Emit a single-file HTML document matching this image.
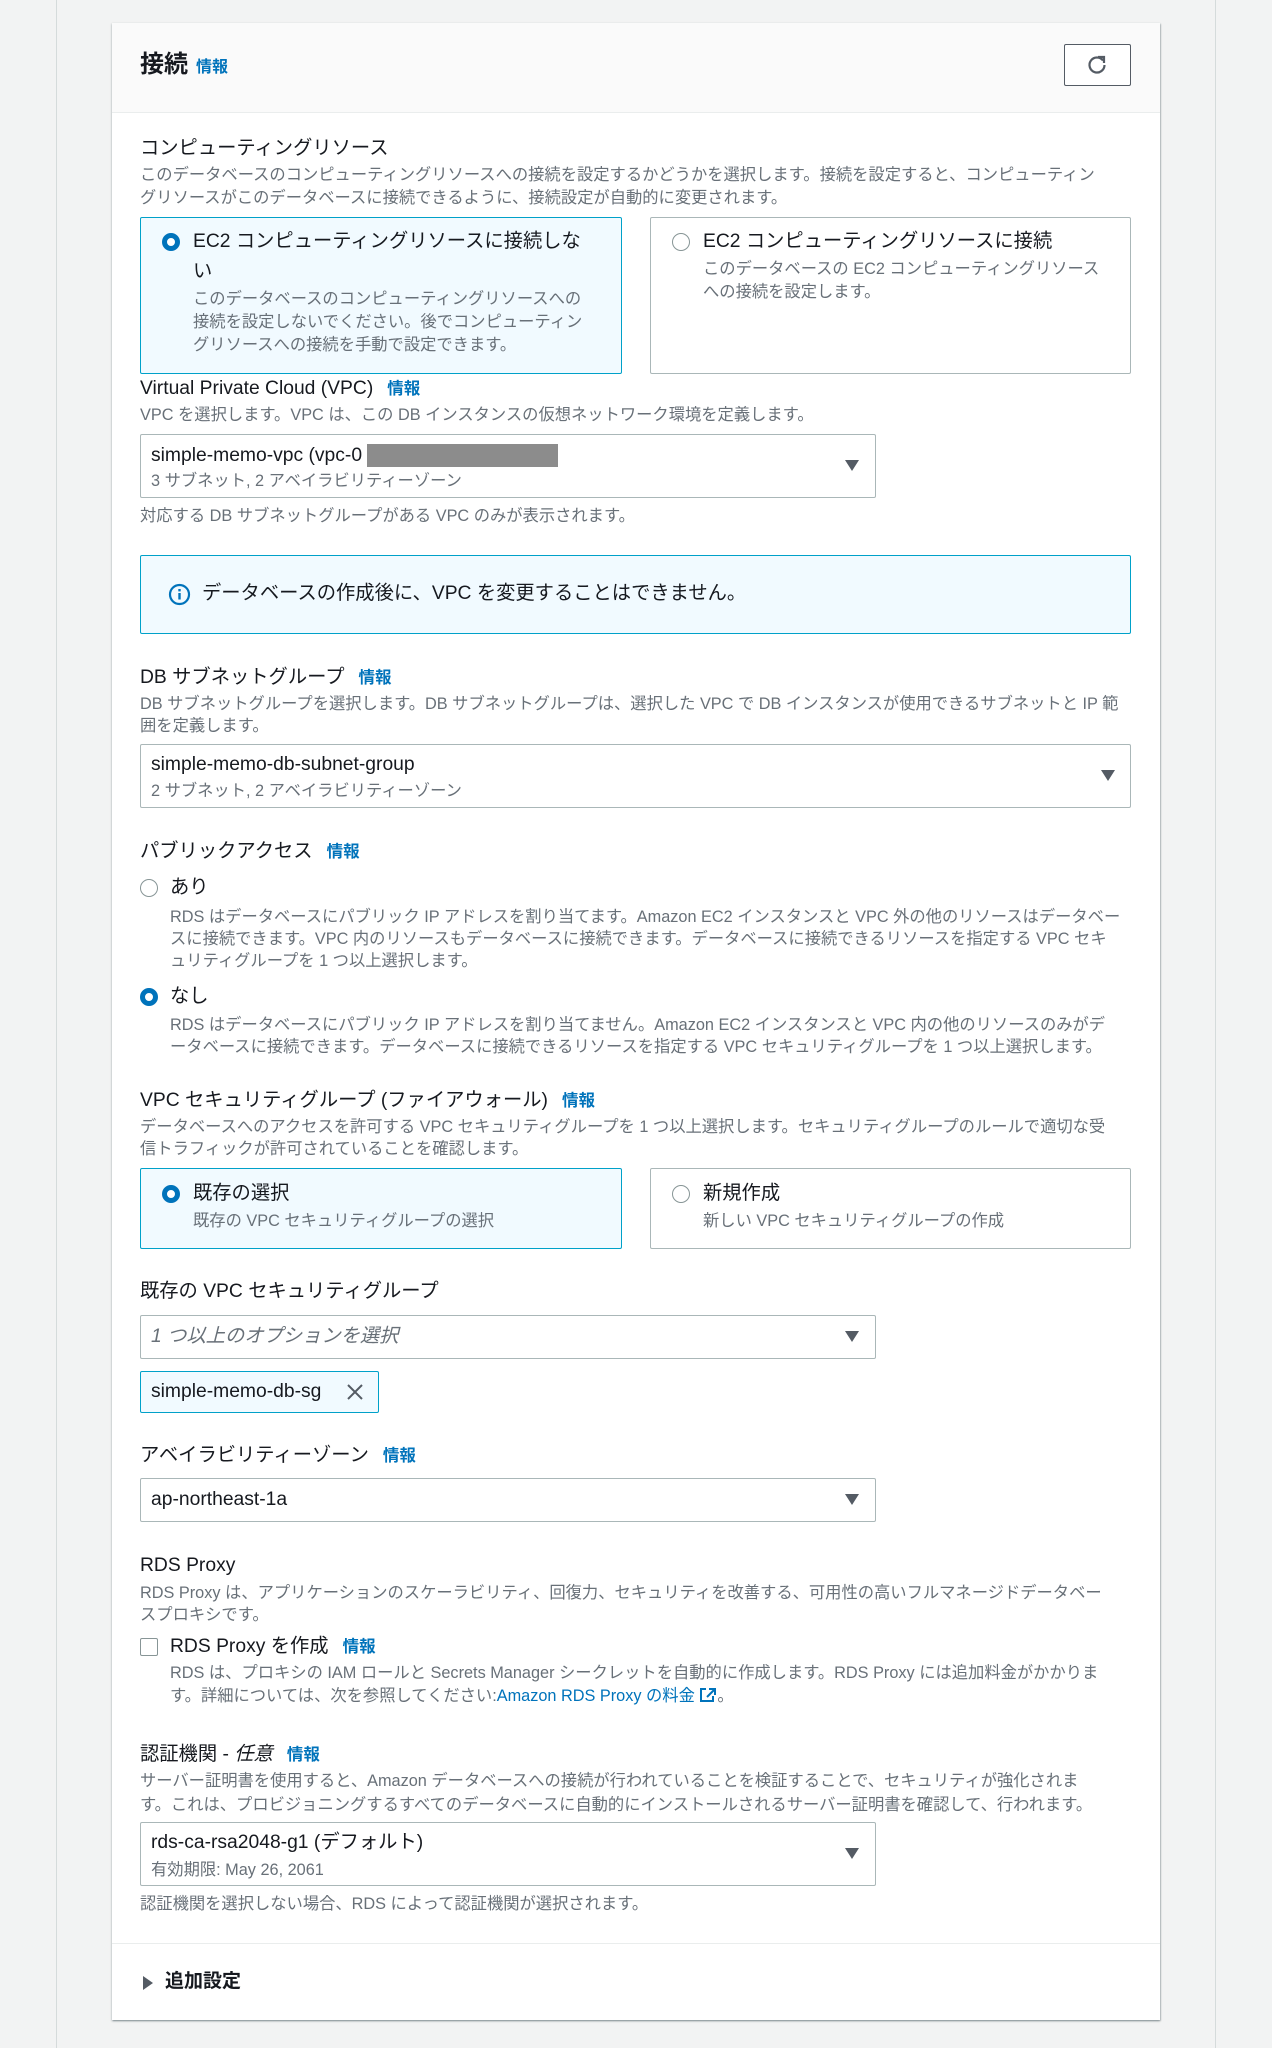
<!DOCTYPE html>
<html><head><meta charset="utf-8">
<style>
*{box-sizing:border-box;margin:0;padding:0}
body{width:1272px;height:2048px;background:#f2f3f3;position:relative;overflow:hidden;font-family:"Liberation Sans","Noto Sans CJK JP",sans-serif;color:#16191f}
.vl{position:absolute;top:0;height:2048px;width:1px;background:#d5dbdb}
.panel{position:absolute;left:112px;top:23px;width:1048px;height:1997px;background:#fff;box-shadow:0 1px 2px rgba(0,28,36,.4),1px 1px 1px rgba(0,28,36,.15)}
.hdr{position:absolute;left:112px;top:23px;width:1048px;height:90px;background:#fafafa;border-bottom:1px solid #eaeded}
.t{position:absolute;white-space:nowrap;line-height:24px}
.lab{font-size:19.3px;color:#16191f}
.d{font-size:16.3px;color:#687078;line-height:23px}
.lk{color:#0073bb;font-size:16.5px;font-weight:bold;margin-left:14px}
.box{position:absolute;border:1px solid #aab7b8;border-radius:2px;background:#fff}
.sel{background:#f1faff;border-color:#00a1c9}
.r{position:absolute;width:18px;height:18px;border-radius:50%;border:1.5px solid #879596;background:#fff}
.r.on{border:5px solid #0073bb}
.arr{position:absolute;width:0;height:0;border-left:7px solid transparent;border-right:7px solid transparent;border-top:11px solid #545b64}
</style></head><body>
<div class="vl" style="left:56px"></div>
<div class="vl" style="left:1215px"></div>
<div class="panel"></div>
<div class="hdr"></div>
<div class="t" style="left:140px;top:50px;font-size:24px;font-weight:bold;line-height:30px">接続<span class="lk" style="font-size:16px;margin-left:8px">情報</span></div>
<div class="box" style="left:1064px;top:44px;width:67px;height:42px;border-color:#545b64"></div>
<svg style="position:absolute;left:1086px;top:54px" width="22" height="22" viewBox="0 0 22 22"><path d="M17 6.5A7.5 7.5 0 1 0 18.5 11" fill="none" stroke="#545b64" stroke-width="2.2"/><path d="M12 3h6v6" fill="none" stroke="#545b64" stroke-width="2.2"/></svg>

<div class="t lab" style="left:140px;top:137px">コンピューティングリソース</div>
<div class="t d" style="left:140px;top:164px">このデータベースのコンピューティングリソースへの接続を設定するかどうかを選択します。接続を設定すると、コンピューティン</div>
<div class="t d" style="left:140px;top:187px">グリソースがこのデータベースに接続できるように、接続設定が自動的に変更されます。</div>

<div class="box sel" style="left:140px;top:217px;width:482px;height:157px"></div>
<div class="r on" style="left:162px;top:233px"></div>
<div class="t lab" style="left:193px;top:230px">EC2 コンピューティングリソースに接続しな</div>
<div class="t lab" style="left:193px;top:260px">い</div>
<div class="t d" style="left:193px;top:288px">このデータベースのコンピューティングリソースへの</div>
<div class="t d" style="left:193px;top:311px">接続を設定しないでください。後でコンピューティン</div>
<div class="t d" style="left:193px;top:334px">グリソースへの接続を手動で設定できます。</div>

<div class="box" style="left:650px;top:217px;width:481px;height:157px"></div>
<div class="r" style="left:672px;top:233px"></div>
<div class="t lab" style="left:703px;top:230px">EC2 コンピューティングリソースに接続</div>
<div class="t d" style="left:703px;top:258px">このデータベースの EC2 コンピューティングリソース</div>
<div class="t d" style="left:703px;top:281px">への接続を設定します。</div>

<div class="t lab" style="left:140px;top:377px">Virtual Private Cloud (VPC)<span class="lk">情報</span></div>
<div class="t d" style="left:140px;top:404px">VPC を選択します。VPC は、この DB インスタンスの仮想ネットワーク環境を定義します。</div>
<div class="box" style="left:140px;top:434px;width:736px;height:64px"></div>
<div class="t lab" style="left:151px;top:444px">simple-memo-vpc (vpc-0</div>
<div style="position:absolute;left:367px;top:444px;width:191px;height:23px;background:#8c8c8c"></div>
<div class="t d" style="left:151px;top:470px">3 サブネット, 2 アベイラビリティーゾーン</div>
<div class="arr" style="left:845px;top:460px"></div>
<div class="t d" style="left:140px;top:505px">対応する DB サブネットグループがある VPC のみが表示されます。</div>

<div class="box" style="left:140px;top:555px;width:991px;height:79px;background:#f1faff;border-color:#00a1c9"></div>
<svg style="position:absolute;left:168px;top:583px" width="23" height="23" viewBox="0 0 23 23"><circle cx="11.5" cy="11.5" r="9.5" fill="none" stroke="#0073bb" stroke-width="2.2"/><rect x="10.3" y="10" width="2.4" height="6.5" fill="#0073bb"/><rect x="10.3" y="6" width="2.4" height="2.4" fill="#0073bb"/></svg>
<div class="t" style="left:202px;top:582px;font-size:19.3px">データベースの作成後に、VPC を変更することはできません。</div>

<div class="t lab" style="left:140px;top:666px">DB サブネットグループ<span class="lk">情報</span></div>
<div class="t d" style="left:140px;top:693px">DB サブネットグループを選択します。DB サブネットグループは、選択した VPC で DB インスタンスが使用できるサブネットと IP 範</div>
<div class="t d" style="left:140px;top:715px">囲を定義します。</div>
<div class="box" style="left:140px;top:744px;width:991px;height:64px"></div>
<div class="t lab" style="left:151px;top:753px">simple-memo-db-subnet-group</div>
<div class="t d" style="left:151px;top:780px">2 サブネット, 2 アベイラビリティーゾーン</div>
<div class="arr" style="left:1101px;top:770px"></div>

<div class="t lab" style="left:140px;top:840px">パブリックアクセス<span class="lk">情報</span></div>
<div class="r" style="left:140px;top:879px"></div>
<div class="t lab" style="left:170px;top:876px">あり</div>
<div class="t d" style="left:170px;top:906px">RDS はデータベースにパブリック IP アドレスを割り当てます。Amazon EC2 インスタンスと VPC 外の他のリソースはデータベー</div>
<div class="t d" style="left:170px;top:928px">スに接続できます。VPC 内のリソースもデータベースに接続できます。データベースに接続できるリソースを指定する VPC セキ</div>
<div class="t d" style="left:170px;top:950px">ュリティグループを 1 つ以上選択します。</div>
<div class="r on" style="left:140px;top:988px"></div>
<div class="t lab" style="left:170px;top:985px">なし</div>
<div class="t d" style="left:170px;top:1014px">RDS はデータベースにパブリック IP アドレスを割り当てません。Amazon EC2 インスタンスと VPC 内の他のリソースのみがデ</div>
<div class="t d" style="left:170px;top:1036px">ータベースに接続できます。データベースに接続できるリソースを指定する VPC セキュリティグループを 1 つ以上選択します。</div>

<div class="t lab" style="left:140px;top:1089px">VPC セキュリティグループ (ファイアウォール)<span class="lk">情報</span></div>
<div class="t d" style="left:140px;top:1116px">データベースへのアクセスを許可する VPC セキュリティグループを 1 つ以上選択します。セキュリティグループのルールで適切な受</div>
<div class="t d" style="left:140px;top:1138px">信トラフィックが許可されていることを確認します。</div>
<div class="box sel" style="left:140px;top:1168px;width:482px;height:81px"></div>
<div class="r on" style="left:162px;top:1185px"></div>
<div class="t lab" style="left:193px;top:1182px">既存の選択</div>
<div class="t d" style="left:193px;top:1210px">既存の VPC セキュリティグループの選択</div>
<div class="box" style="left:650px;top:1168px;width:481px;height:81px"></div>
<div class="r" style="left:672px;top:1185px"></div>
<div class="t lab" style="left:703px;top:1182px">新規作成</div>
<div class="t d" style="left:703px;top:1210px">新しい VPC セキュリティグループの作成</div>

<div class="t lab" style="left:140px;top:1280px">既存の VPC セキュリティグループ</div>
<div class="box" style="left:140px;top:1315px;width:736px;height:44px"></div>
<div class="t lab" style="left:151px;top:1325px;font-style:italic;color:#687078">1 つ以上のオプションを選択</div>
<div class="arr" style="left:845px;top:1331px"></div>
<div class="box sel" style="left:140px;top:1371px;width:239px;height:42px;border-color:#00a1c9"></div>
<div class="t lab" style="left:151px;top:1380px">simple-memo-db-sg</div>
<svg style="position:absolute;left:346px;top:1383px" width="18" height="18" viewBox="0 0 18 18"><path d="M2 2L16 16M16 2L2 16" stroke="#545b64" stroke-width="2"/></svg>

<div class="t lab" style="left:140px;top:1444px">アベイラビリティーゾーン<span class="lk">情報</span></div>
<div class="box" style="left:140px;top:1478px;width:736px;height:44px"></div>
<div class="t lab" style="left:151px;top:1488px">ap-northeast-1a</div>
<div class="arr" style="left:845px;top:1494px"></div>

<div class="t lab" style="left:140px;top:1554px">RDS Proxy</div>
<div class="t d" style="left:140px;top:1582px">RDS Proxy は、アプリケーションのスケーラビリティ、回復力、セキュリティを改善する、可用性の高いフルマネージドデータベー</div>
<div class="t d" style="left:140px;top:1604px">スプロキシです。</div>
<div style="position:absolute;left:140px;top:1638px;width:18px;height:18px;border:1.5px solid #879596;border-radius:2px;background:#fff"></div>
<div class="t lab" style="left:170px;top:1635px">RDS Proxy を作成<span class="lk">情報</span></div>
<div class="t d" style="left:170px;top:1662px">RDS は、プロキシの IAM ロールと Secrets Manager シークレットを自動的に作成します。RDS Proxy には追加料金がかかりま</div>
<div class="t d" style="left:170px;top:1685px">す。詳細については、次を参照してください:<span style="color:#0073bb">Amazon RDS Proxy の料金</span> <svg width="18" height="16" viewBox="0 0 18 16" style="vertical-align:-2px"><path d="M7 2H2v12h12V9M10 2h6v6M16 2L8 10" fill="none" stroke="#0073bb" stroke-width="2"/></svg>。</div>

<div class="t lab" style="left:140px;top:1743px">認証機関 - <i>任意</i><span class="lk">情報</span></div>
<div class="t d" style="left:140px;top:1770px">サーバー証明書を使用すると、Amazon データベースへの接続が行われていることを検証することで、セキュリティが強化されま</div>
<div class="t d" style="left:140px;top:1794px">す。これは、プロビジョニングするすべてのデータベースに自動的にインストールされるサーバー証明書を確認して、行われます。</div>
<div class="box" style="left:140px;top:1822px;width:736px;height:64px"></div>
<div class="t lab" style="left:151px;top:1831px">rds-ca-rsa2048-g1 (デフォルト)</div>
<div class="t d" style="left:151px;top:1859px">有効期限: May 26, 2061</div>
<div class="arr" style="left:845px;top:1848px"></div>
<div class="t d" style="left:140px;top:1893px">認証機関を選択しない場合、RDS によって認証機関が選択されます。</div>

<div style="position:absolute;left:112px;top:1943px;width:1048px;height:1px;background:#eaeded"></div>
<div style="position:absolute;left:143px;top:1976px;width:0;height:0;border-top:7px solid transparent;border-bottom:7px solid transparent;border-left:10px solid #545b64"></div>
<div class="t" style="left:165px;top:1970px;font-size:19px;font-weight:bold;color:#16191f">追加設定</div>
</body></html>
